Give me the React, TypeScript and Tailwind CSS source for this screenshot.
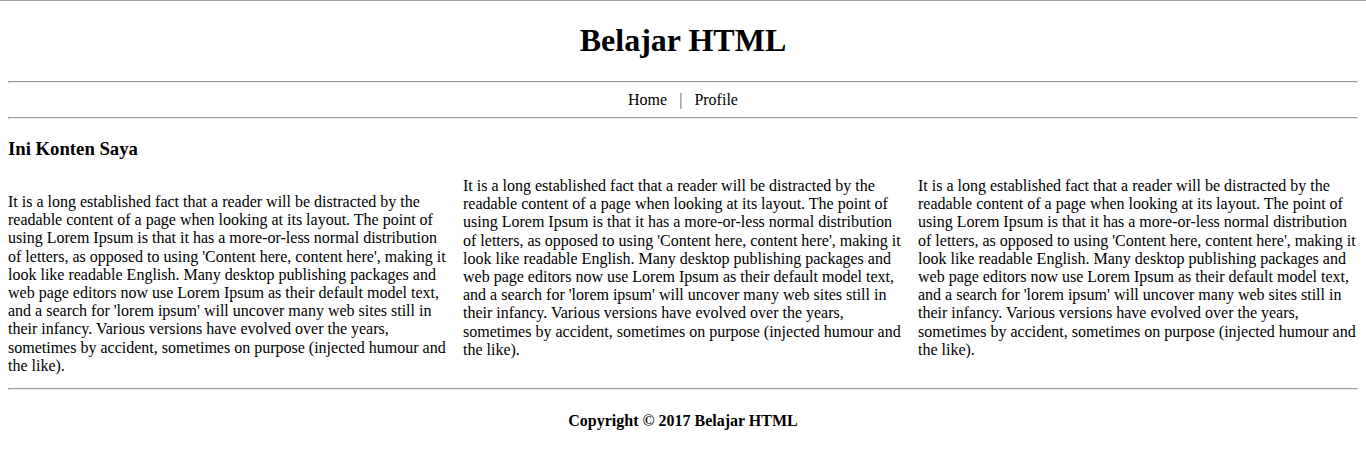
import React from "react";

const TEXT =
  "It is a long established fact that a reader will be distracted by the readable content of a page when looking at its layout. The point of using Lorem Ipsum is that it has a more-or-less normal distribution of letters, as opposed to using 'Content here, content here', making it look like readable English. Many desktop publishing packages and web page editors now use Lorem Ipsum as their default model text, and a search for 'lorem ipsum' will uncover many web sites still in their infancy. Various versions have evolved over the years, sometimes by accident, sometimes on purpose (injected humour and the like).";

function Hr({ className = "" }: { className?: string }) {
  return (
    <div
      className={
        "h-[2px] border-t border-l border-[#9a9a9a] border-b border-b-[#eeeeee] border-r border-r-[#eeeeee] box-border " +
        className
      }
    />
  );
}

export default function App() {
  return (
    <div className="font-['Liberation_Serif','Times_New_Roman',serif] text-black bg-white min-h-[454px] text-[16px] leading-[normal]">
      <div className="h-px bg-[#a0a0a0]" />
      <div className="px-2">
        <h1 className="text-[32px] font-bold text-center leading-[37px] mt-[21px] mb-[22px]">
          Belajar HTML
        </h1>
        <Hr />
        <nav className="my-2 text-center leading-[18px]">
          <a>Home</a>
          <span className="mx-3 text-[#555]">|</span>
          <a>Profile</a>
        </nav>
        <Hr />
        <h3 className="text-[18.72px] font-bold mt-[19px] leading-[normal]">Ini Konten Saya</h3>
        <div className="grid grid-cols-[440px_440px_440px] gap-x-[15px] items-start mt-[17px] leading-[18.2px]">
          <p className="pt-[16px]">{TEXT}</p>
          <p>{TEXT}</p>
          <p>{TEXT}</p>
        </div>
        <Hr className="mt-[13px]" />
        <p className="mt-[22px] text-center font-bold leading-[normal]">Copyright © 2017 Belajar HTML</p>
      </div>
    </div>
  );
}
